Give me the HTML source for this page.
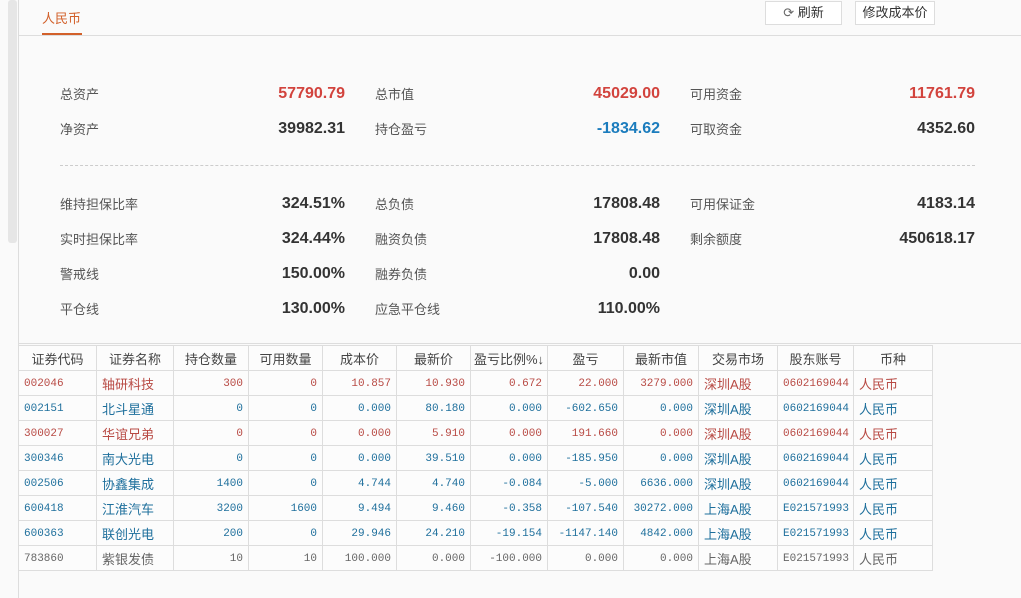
<!DOCTYPE html>
<html><head><meta charset="utf-8">
<style>
*{margin:0;padding:0;box-sizing:border-box}
body{width:1021px;height:598px;background:#fafafa;position:relative;overflow:hidden;font-family:"Liberation Sans","Noto Sans CJK SC",sans-serif;}
.a{position:absolute}
.lbl{position:absolute;font-size:13px;color:#555;line-height:16px}
.val{position:absolute;font-size:16px;font-weight:bold;color:#333;line-height:18px;text-align:right;width:200px}
.r{color:#d2433d}.b{color:#1b7cbd}
table{position:absolute;left:18px;top:345px;border-collapse:collapse;font-size:12px;background:#fcfcfc;table-layout:fixed;width:914px}
td,th{height:25px;border:1px solid #ddd;padding:0 5px;white-space:nowrap;font-weight:normal;overflow:hidden}
th{color:#444;font-size:13px;text-align:center;padding:0}
td{text-align:right;font-family:"Liberation Mono","Noto Sans CJK SC",monospace;font-size:11px;padding-top:1px}
td.n,td.l{text-align:left;font-family:"Liberation Sans","Noto Sans CJK SC",sans-serif;font-size:13px;padding-top:0}
td.c{text-align:left}
tr.R td{color:#b84a44}tr.B td{color:#1e6f9c}tr.G td{color:#666}
</style></head><body>
<div class="a" style="left:8px;top:0;width:9px;height:243px;background:#e6e6e6;border-radius:3px"></div>
<div class="a" style="left:18px;top:0;width:1003px;height:598px;background:#fafafa;border-left:1px solid #ddd"></div>
<div class="a" style="left:19px;top:35px;width:1002px;height:1px;background:#ddd"></div>
<div class="a" style="left:42px;top:8px;font-size:13px;color:#d2602a">人民币</div>
<div class="a" style="left:42px;top:33px;width:40px;height:2px;background:#d2602a"></div>
<div class="a" style="left:765px;top:1px;width:77px;height:24px;border:1px solid #ddd;background:#fff;font-size:13px;color:#333;text-align:center;line-height:22px"><span style="color:#666">⟳</span> 刷新</div>
<div class="a" style="left:855px;top:1px;width:80px;height:24px;border:1px solid #ddd;background:#fff;font-size:13px;color:#333;text-align:center;line-height:22px">修改成本价</div>

<div class="lbl" style="left:60px;top:87px">总资产</div><div class="val r" style="left:145px;top:85px">57790.79</div>
<div class="lbl" style="left:375px;top:87px">总市值</div><div class="val r" style="left:460px;top:85px">45029.00</div>
<div class="lbl" style="left:690px;top:87px">可用资金</div><div class="val r" style="left:775px;top:85px">11761.79</div>
<div class="lbl" style="left:60px;top:122px">净资产</div><div class="val" style="left:145px;top:120px">39982.31</div>
<div class="lbl" style="left:375px;top:122px">持仓盈亏</div><div class="val b" style="left:460px;top:120px">-1834.62</div>
<div class="lbl" style="left:690px;top:122px">可取资金</div><div class="val" style="left:775px;top:120px">4352.60</div>
<div class="a" style="left:60px;top:165px;width:915px;border-top:1px dashed #ccc"></div>
<div class="lbl" style="left:60px;top:197px">维持担保比率</div><div class="val" style="left:145px;top:195px">324.51%</div>
<div class="lbl" style="left:375px;top:197px">总负债</div><div class="val" style="left:460px;top:195px">17808.48</div>
<div class="lbl" style="left:690px;top:197px">可用保证金</div><div class="val" style="left:775px;top:195px">4183.14</div>
<div class="lbl" style="left:60px;top:232px">实时担保比率</div><div class="val" style="left:145px;top:230px">324.44%</div>
<div class="lbl" style="left:375px;top:232px">融资负债</div><div class="val" style="left:460px;top:230px">17808.48</div>
<div class="lbl" style="left:690px;top:232px">剩余额度</div><div class="val" style="left:775px;top:230px">450618.17</div>
<div class="lbl" style="left:60px;top:267px">警戒线</div><div class="val" style="left:145px;top:265px">150.00%</div>
<div class="lbl" style="left:375px;top:267px">融券负债</div><div class="val" style="left:460px;top:265px">0.00</div>
<div class="lbl" style="left:60px;top:302px">平仓线</div><div class="val" style="left:145px;top:300px">130.00%</div>
<div class="lbl" style="left:375px;top:302px">应急平仓线</div><div class="val" style="left:460px;top:300px">110.00%</div>
<div class="a" style="left:19px;top:343px;width:1002px;height:1px;background:#ddd"></div>

<table>
<colgroup><col style="width:78px"><col style="width:77px"><col style="width:75px"><col style="width:74px"><col style="width:74px"><col style="width:74px"><col style="width:77px"><col style="width:76px"><col style="width:75px"><col style="width:79px"><col style="width:76px"><col style="width:79px"></colgroup>
<tr><th>证券代码</th><th>证券名称</th><th>持仓数量</th><th>可用数量</th><th>成本价</th><th>最新价</th><th>盈亏比例%↓</th><th>盈亏</th><th>最新市值</th><th>交易市场</th><th>股东账号</th><th>币种</th></tr>
<tr class="R"><td class="c">002046</td><td class="n">轴研科技</td><td>300</td><td>0</td><td>10.857</td><td>10.930</td><td>0.672</td><td>22.000</td><td>3279.000</td><td class="l">深圳A股</td><td class="c">0602169044</td><td class="l">人民币</td></tr>
<tr class="B"><td class="c">002151</td><td class="n">北斗星通</td><td>0</td><td>0</td><td>0.000</td><td>80.180</td><td>0.000</td><td>-602.650</td><td>0.000</td><td class="l">深圳A股</td><td class="c">0602169044</td><td class="l">人民币</td></tr>
<tr class="R"><td class="c">300027</td><td class="n">华谊兄弟</td><td>0</td><td>0</td><td>0.000</td><td>5.910</td><td>0.000</td><td>191.660</td><td>0.000</td><td class="l">深圳A股</td><td class="c">0602169044</td><td class="l">人民币</td></tr>
<tr class="B"><td class="c">300346</td><td class="n">南大光电</td><td>0</td><td>0</td><td>0.000</td><td>39.510</td><td>0.000</td><td>-185.950</td><td>0.000</td><td class="l">深圳A股</td><td class="c">0602169044</td><td class="l">人民币</td></tr>
<tr class="B"><td class="c">002506</td><td class="n">协鑫集成</td><td>1400</td><td>0</td><td>4.744</td><td>4.740</td><td>-0.084</td><td>-5.000</td><td>6636.000</td><td class="l">深圳A股</td><td class="c">0602169044</td><td class="l">人民币</td></tr>
<tr class="B"><td class="c">600418</td><td class="n">江淮汽车</td><td>3200</td><td>1600</td><td>9.494</td><td>9.460</td><td>-0.358</td><td>-107.540</td><td>30272.000</td><td class="l">上海A股</td><td class="c">E021571993</td><td class="l">人民币</td></tr>
<tr class="B"><td class="c">600363</td><td class="n">联创光电</td><td>200</td><td>0</td><td>29.946</td><td>24.210</td><td>-19.154</td><td>-1147.140</td><td>4842.000</td><td class="l">上海A股</td><td class="c">E021571993</td><td class="l">人民币</td></tr>
<tr class="G"><td class="c">783860</td><td class="n">紫银发债</td><td>10</td><td>10</td><td>100.000</td><td>0.000</td><td>-100.000</td><td>0.000</td><td>0.000</td><td class="l">上海A股</td><td class="c">E021571993</td><td class="l">人民币</td></tr>
</table>
</body></html>
